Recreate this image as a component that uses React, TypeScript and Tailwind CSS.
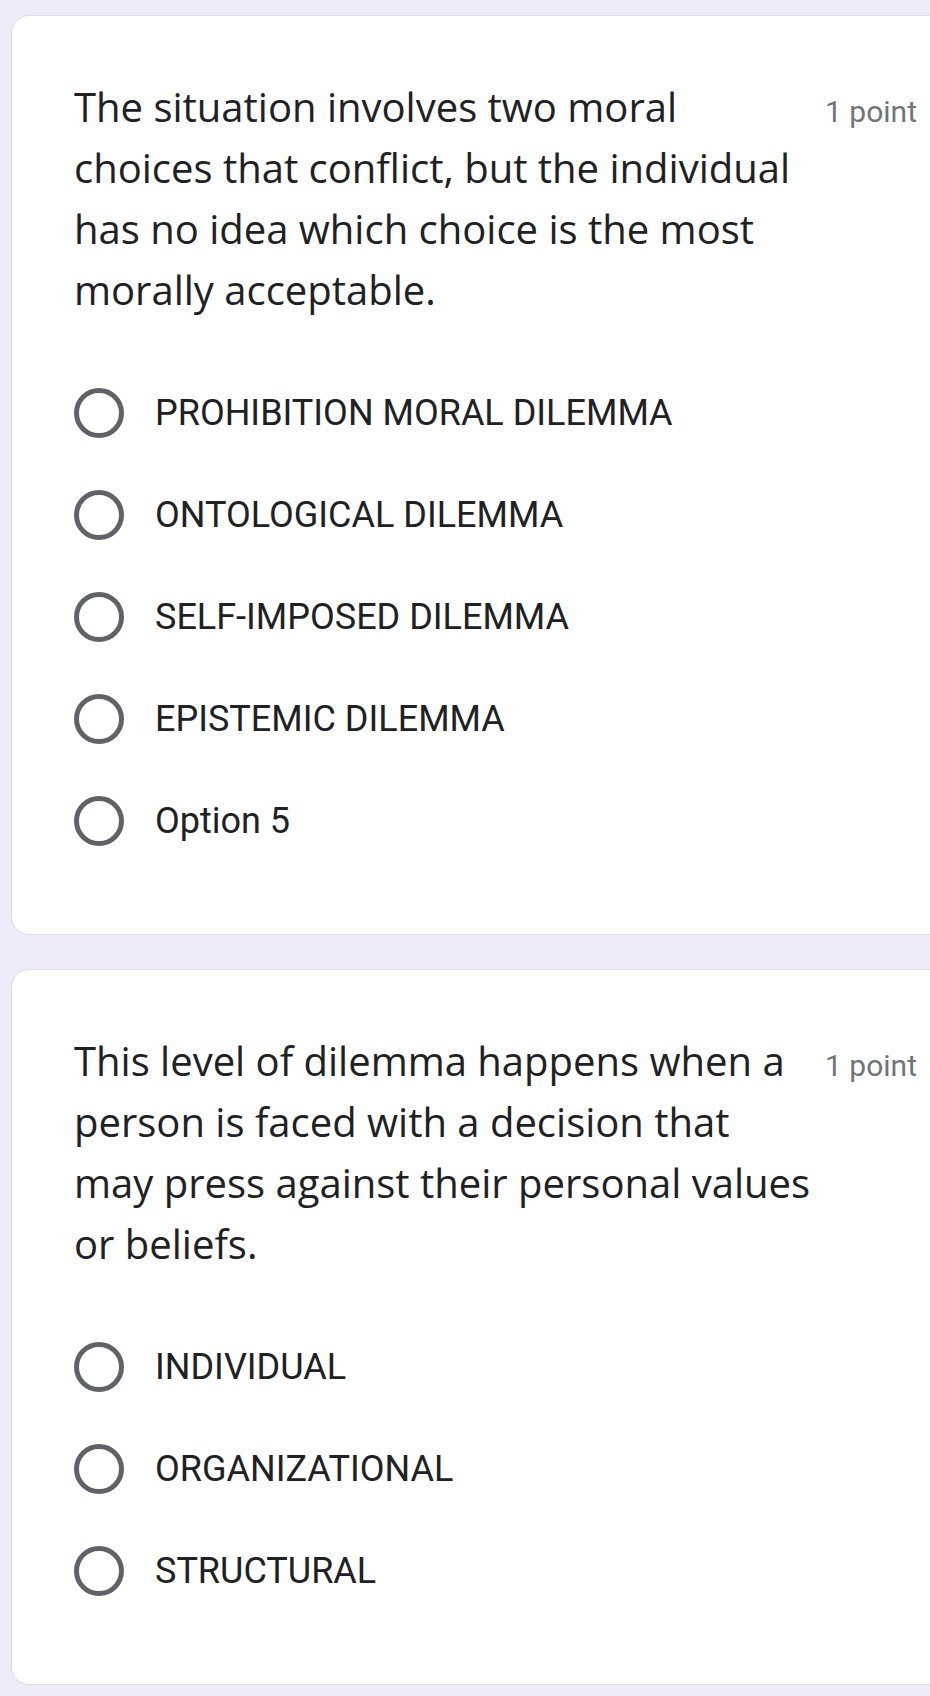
const questions = [
  {
    lines: [
      "The situation involves two moral",
      "choices that conflict, but the individual",
      "has no idea which choice is the most",
      "morally acceptable.",
    ],
    options: [
      "PROHIBITION MORAL DILEMMA",
      "ONTOLOGICAL DILEMMA",
      "SELF-IMPOSED DILEMMA",
      "EPISTEMIC DILEMMA",
      "Option 5",
    ],
  },
  {
    lines: [
      "This level of dilemma happens when a",
      "person is faced with a decision that",
      "may press against their personal values",
      "or beliefs.",
    ],
    options: ["INDIVIDUAL", "ORGANIZATIONAL", "STRUCTURAL"],
  },
];

const QuestionCard = ({ lines, options }: { lines: string[]; options: string[] }) => {
  return (
    <div className="w-[940px] shrink-0 bg-white border border-[#dadce0] rounded-[18px] pt-[60px] pb-[62px] pl-[62px] pr-[33px]">
      <div className="flex flex-row items-baseline justify-between">
        <h2 className="text-[#202124] text-[40px] leading-[61px] font-['Open_Sans',sans-serif] whitespace-nowrap">
          {lines.map((line, i) => (
            <span key={i} className="block">
              {line}
            </span>
          ))}
        </h2>
        <span className="text-[#70757a] text-[30px] font-['Roboto',sans-serif] whitespace-nowrap">1 point</span>
      </div>
      <ul className="flex flex-col mt-[42px]">
        {options.map((opt) => (
          <li key={opt} className="flex flex-row items-center h-[102px]">
            <div className="w-[50px] h-[50px] rounded-full border-[5px] border-[#5f6368] shrink-0" />
            <span className="ml-[31px] text-[#202124] text-[36px] font-['Roboto',sans-serif]">{opt}</span>
          </li>
        ))}
      </ul>
    </div>
  );
};

export default function App() {
  return (
    <div className="w-[930px] min-h-[1696px] bg-[#f0ebf8] overflow-hidden pt-[15px] pl-[11px] flex flex-col gap-[34px]">
      {questions.map((q, i) => (
        <QuestionCard key={i} lines={q.lines} options={q.options} />
      ))}
    </div>
  );
}
